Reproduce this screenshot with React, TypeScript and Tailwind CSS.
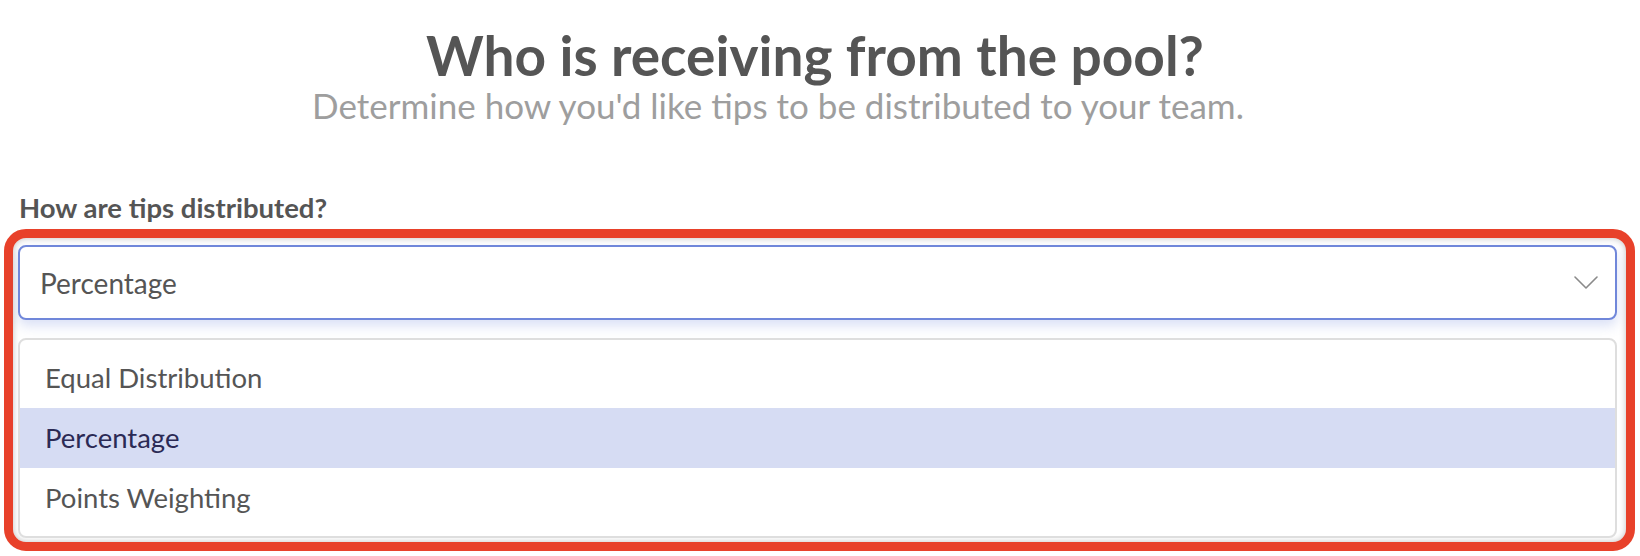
const OPTIONS = ["Equal Distribution", "Percentage", "Points Weighting"];

function Chevron() {
  return (
    <svg width="24" height="14" viewBox="0 0 24 14" fill="none" className="text-[#8a8a8a]">
      <polyline points="1,1 12,12 23,1" stroke="currentColor" strokeWidth="1.6" strokeLinecap="round" strokeLinejoin="round" />
    </svg>
  );
}

export default function App() {
  const selected = "Percentage";
  return (
    <div className="w-[1640px] h-[556px] bg-white overflow-hidden font-['Lato','Liberation_Sans',sans-serif]">
      {/* Header */}
      <div className="pt-[27px] pr-[10px] text-center">
        <h1 className="text-[55px] leading-[56px] font-bold text-[#555555]">Who is receiving from the pool?</h1>
      </div>
      <p className="pr-[84px] text-center text-[35px] leading-[44px] font-normal text-[#9e9e9e]">
        Determine how you'd like tips to be distributed to your team.
      </p>

      {/* Field */}
      <div className="mt-[66px] pl-[19px]">
        <p className="text-[27.5px] leading-[30px] font-bold text-[#555555]">How are tips distributed?</p>
      </div>

      <div className="ml-[4px] mt-[6px] w-[1631px] rounded-[22px] border-[9px] border-[#e8412a] pt-[7px] pb-[4px] pl-[5px] pr-[9px] shadow-[inset_0_0_6px_rgba(0,0,0,0.25)]">
        <div className="h-[75px] rounded-[8px] border-2 border-[#7087da] bg-white flex items-center justify-between pl-[20px] pr-[17px] shadow-[0_6px_12px_rgba(112,135,218,0.25)]">
          <span className="text-[28px] text-[#555555]">{selected}</span>
          <Chevron />
        </div>

        <div className="mt-[18px] rounded-[8px] border-2 border-[#dedede] bg-white py-[8px]">
          {OPTIONS.map((o) => (
            <div
              key={o}
              className={
                o === selected
                  ? "h-[60px] flex items-center pl-[25px] bg-[#d6dcf3] text-[27.5px] text-[#2b2a55]"
                  : "h-[60px] flex items-center pl-[25px] text-[27.5px] text-[#555555]"
              }
            >
              {o}
            </div>
          ))}
        </div>
      </div>
    </div>
  );
}
